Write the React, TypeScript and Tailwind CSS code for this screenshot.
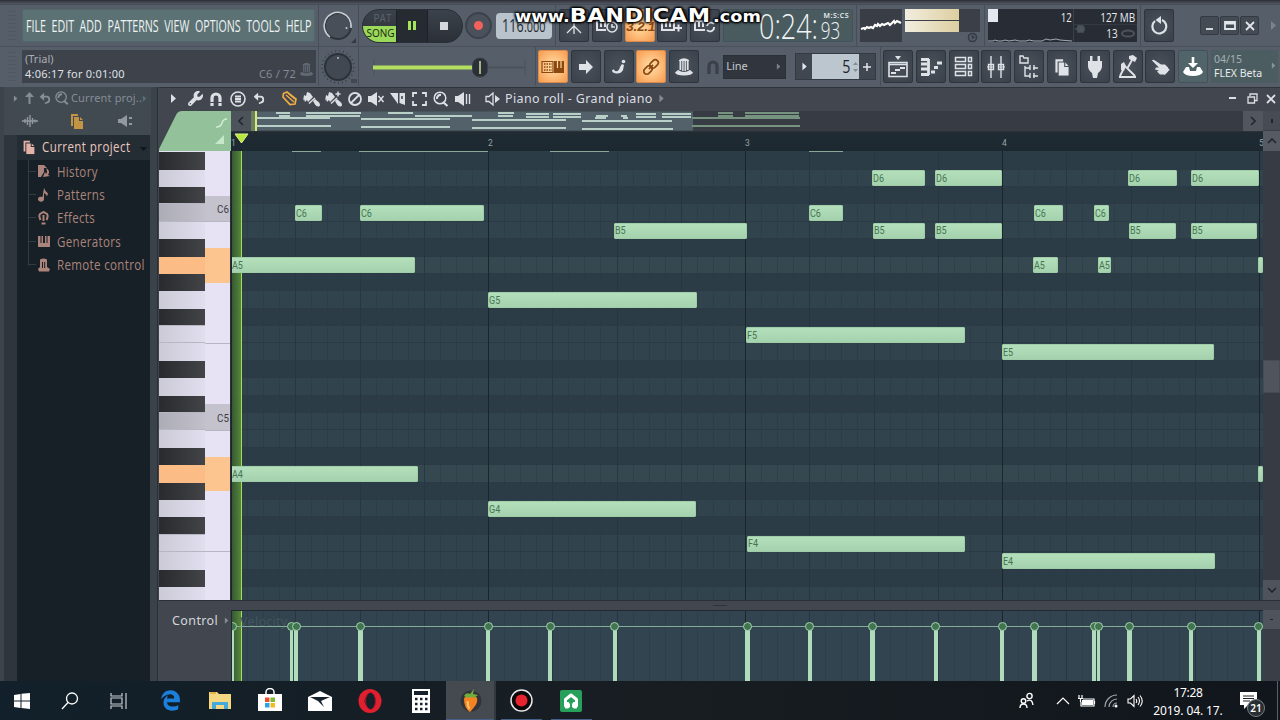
import type { ReactNode } from "react";
import { FaEdgeLegacy, FaWrench } from "react-icons/fa6";

const ROW = 17.4;
const BAR = 257;
const STEP = BAR / 16;

/* semitone rows shown in the roll, top to bottom */
const rows = [
    "D#6", "D6", "C#6", "C6", "B5", "A#5", "A5", "G#5", "G5", "F#5", "F5", "E5", "D#5",
    "D5", "C#5", "C5", "B4", "A#4", "A4", "G#4", "G4", "F#4", "F4", "E4", "D#4", "D4",
];

/* note name, start, end */
const notes: [string, number, number][] = [
    ["D6", 640.5, 694], ["D6", 704, 770.5], ["D6", 897, 946], ["D6", 959.5, 1028],
    ["C6", 64, 91], ["C6", 129, 253], ["C6", 578, 612], ["C6", 803, 832], ["C6", 863, 878],
    ["B5", 383, 516], ["B5", 642, 694], ["B5", 704, 770.5], ["B5", 898, 945], ["B5", 959.5, 1026],
    ["A5", 0, 184], ["A5", 802, 827], ["A5", 867, 880], ["A5", 1027, 1032],
    ["G5", 256.5, 466], ["F5", 515, 734], ["E5", 771, 983],
    ["A4", 0, 187], ["A4", 1027, 1032],
    ["G4", 256.5, 464.5], ["F4", 515.5, 734], ["E4", 771, 984],
];

/* x, width of the stem */
const velocities: [number, number][] = [
    [2, 3], [61, 3.5], [65.5, 3.5], [129.5, 5], [257.5, 4], [319.5, 4], [384, 4], [516.5, 5], [579, 4],
    [642, 5], [705, 4], [771.5, 4], [803.5, 5], [863.5, 3.5], [868, 3.5], [898.5, 5], [960.5, 4], [1028, 4],
];

/* x, y, width inside the overview strip */
const overview: [number, number, number][] = [
    [25, 0, 14], [28, 3, 11], [55, 0, 55], [55, 3, 54], [5, 5, 74], [5, 13, 75],
    [137, 0, 25], [164, 3, 57], [110, 6, 89], [110, 14, 89], [221, 7, 94], [221, 15, 94],
    [247, 0, 16], [247, 3, 15], [275, 1, 23], [275, 4, 23], [302, 1, 28], [302, 4, 28],
    [345, 3, 12], [344, 5, 11], [370, 3, 6], [372, 5, 5], [385, 1, 20], [385, 4, 20],
    [411, 1, 29], [411, 4, 29], [331, 8, 90], [331, 16, 91],
];
const overviewRest: [number, number, number][] = [
    [467, 0, 15], [467, 3, 15], [494, 0, 54], [494, 3, 54], [441, 5, 108], [441, 13, 108],
];

const isBlack = (n: string) => n.includes("#");

function Icon({ w = 24, h = w, className = "", children }: { w?: number; h?: number; className?: string; children: ReactNode }) {
    return (
        <svg
            width={w}
            height={h}
            viewBox={`0 0 ${w} ${h}`}
            fill="none"
            stroke="currentColor"
            strokeWidth="1.6"
            className={`shrink-0 ${className}`}
        >
            {children}
        </svg>
    );
}

function Btn({ on = false, children }: { on?: boolean; children: ReactNode }) {
    return (
        <div
            className={`flex h-[33px] w-[30px] shrink-0 items-center justify-center rounded-[2px] border ${
                on
                    ? "border-[#d98a4c] bg-radial from-[#ffe0a8] to-[#f79a4c] text-[#8a4712]"
                    : "border-[#30353d] bg-radial from-[#4a515b] to-[#3b414b] text-[#dfe3e8]"
            }`}
        >
            {children}
        </div>
    );
}

function Section({ className, children }: { className: string; children?: ReactNode }) {
    return <div className={`flex h-full shrink-0 items-center border-r border-[#474e58] ${className}`}>{children}</div>;
}

function Grip() {
    return (
        <div className="ml-1 flex w-2 flex-col gap-[3px]">
            {Array.from({ length: 8 }, (_, i) => (
                <div key={i} className="h-px bg-[#4f5761]" />
            ))}
        </div>
    );
}

function Triangle({ className = "" }: { className?: string }) {
    return (
        <Icon w={5} h={9} className={className}>
            <path d="M0 0 5 4.5 0 9z" fill="currentColor" stroke="none" />
        </Icon>
    );
}

function Pages({ className = "" }: { className?: string }) {
    return (
        <Icon w={14} h={16} className={className}>
            <path d="M1 1h7v2H3v10H1z" fill="currentColor" stroke="none" />
            <path d="M4 4h5v4h4v8H4zM10 4l3 3h-3z" fill="currentColor" stroke="none" />
        </Icon>
    );
}

function Hat({ w = 20, className = "" }: { w?: number; className?: string }) {
    return (
        <svg width={w} height={w} viewBox="0 0 20 20" fill="currentColor" className={`shrink-0 ${className}`}>
            <path d="M5.500 3h1.800v10H5.500zM8.200 2h1.400v12H8.200zM10.500 2h1.400v12h-1.400zM12.800 3h1.800v10h-1.800z" />
            <path d="M5 3Q10-.5 15 3v1H5zM4 13q6 4 12 0l3 2.500q-1 3-9 3t-9-3z" />
        </svg>
    );
}

function Magnet({ className = "" }: { className?: string }) {
    return (
        <Icon w={14} h={15} className={className}>
            <path d="M3 15V7a4 4 0 0 1 8 0v8" strokeWidth="3.200" />
            <path d="M1 11.500h4M9 11.500h4" stroke="#42464f" strokeWidth="1" />
        </Icon>
    );
}

function Undo({ className = "" }: { className?: string }) {
    return (
        <Icon w={12} h={13} className={className}>
            <path d="M4 4.500h3a3.200 3.200 0 0 1 1 6.500L6 12" strokeWidth="2" />
            <path d="M0 4.500 5 0v9z" fill="currentColor" stroke="none" />
        </Icon>
    );
}

function Lens({ className = "" }: { className?: string }) {
    return (
        <Icon w={16} h={16} className={className}>
            <circle cx="7" cy="7" r="5.800" strokeWidth="1.500" />
            <path d="M4 8a3.500 3.500 0 0 1 4-4M10 11l4.500 4" strokeWidth="2.200" />
        </Icon>
    );
}

function Brush({ plus = false }: { plus?: boolean }) {
    return (
        <Icon w={17} h={16}>
            <path d="M0 10 1 4l2 1 1-4 3 1 3 4-5 5-1-2-2 2-1-3z" fill="currentColor" stroke="none" />
            <path d="M10 10l2-2 4 3.500q2 2.500 0 4-2.500.5-4-2z" fill="currentColor" stroke="none" />
            <path d="M6 12.500 12 7" strokeWidth="1.500" />
            {plus && <path d="M10.500 3h5M13 .5v5" strokeWidth="1.500" />}
        </Icon>
    );
}

function TopToolbar() {
    return (
        <div className="flex h-[41px] shrink-0 pl-1">
            <Section className="w-[315px]">
                <Grip />
                <div className="ml-1.5 flex h-[33px] w-[293px] items-center rounded-[2px] border border-[#53666a] bg-[#5b7174] pl-[3px] text-[16px] text-[#eef3f3]">
                    <span className="w-[284px] origin-left scale-x-[0.667] font-['Open_Sans',sans-serif] font-medium whitespace-pre">
                        FILE  EDIT  ADD  PATTERNS  VIEW  OPTIONS  TOOLS  HELP
                    </span>
                </div>
            </Section>
            <Section className="w-10 justify-center">
                <Icon w={36} h={36}>
                    <circle cx="17" cy="18" r="13" fill="#484f59" stroke="#2e343c" strokeWidth="2" />
                    <path d="M9 29A13.500 13.500 0 1 1 30 20" stroke="#c9ced4" strokeWidth="1.500" />
                    <circle cx="25.500" cy="20" r="1" fill="#c9ced4" stroke="none" />
                    <path d="M35 30v5h-5z" fill="#343a42" stroke="none" />
                </Icon>
            </Section>
            <Section className="w-[197px]">
                <div className="ml-[3px] flex h-[34px] w-[101px] overflow-hidden rounded-[17px] border border-[#2a2f37] bg-linear-to-b from-[#3c424b] to-[#2b3038]">
                    <div className="flex w-[33px] flex-col text-center font-['Open_Sans',sans-serif] text-[10px] leading-[17px]">
                        <span className="h-4 pl-1.5 text-[#5d646d]">PAT</span>
                        <span className="h-[17px] bg-[#9bd95b] pl-0.5 leading-[14px] text-[#18240f]">SONG</span>
                    </div>
                    <div className="flex w-8 items-center justify-center gap-0.5 border-x border-[#1d2127] bg-[#262b32]">
                        <div className="h-[9px] w-[3px] bg-[#a4e45c]" />
                        <div className="h-[9px] w-[3px] bg-[#a4e45c]" />
                    </div>
                    <div className="flex flex-1 items-center justify-center pr-0.5">
                        <div className="size-2 bg-[#d4d7dc]" />
                    </div>
                </div>
                <div className="ml-[2px] flex size-[27px] items-center justify-center rounded-full border-2 border-[#3c424b] bg-[#4a515b]">
                    <div className="size-[9px] rounded-full bg-[#f4605a]" />
                </div>
                <div className="ml-[4px] flex h-[26px] w-14 items-center rounded-[4px] bg-[#b9c3cb] pl-1.5 font-['Open_Sans',sans-serif] text-[#22282e]">
                    <span className="w-[22px] origin-left scale-x-[0.7] text-[18px]">116</span>
                    <span className="origin-left scale-x-[0.78] pt-0.5 text-[14px]">.000</span>
                </div>
            </Section>
            <Section className="w-[301px] gap-[2.8px] pl-[3px]">
                <Btn>
                    <Icon w={24} h={16}>
                        <path d="M12 16V3M12 8 5 15M12 8l7 7" strokeWidth="1.300" />
                    </Icon>
                </Btn>
                <Btn>
                    <Icon w={24} h={16}>
                        <path d="M2 2v10h9M6 2v7M10 2v7M2 3h9" strokeWidth="2" />
                        <circle cx="17" cy="9" r="5" />
                        <path d="M17 6v3h3" />
                    </Icon>
                </Btn>
                <Btn on>
                    <span className="pt-1 font-['Liberation_Mono',monospace] text-[13px] font-bold tracking-[-2.400px] italic">3.2.1</span>
                </Btn>
                <Btn>
                    <Icon w={24} h={16}>
                        <path d="M2 2v10h12V2M6 2v7M10 2v7M2 3h12" strokeWidth="2" />
                        <path d="M15 10h7M18.500 6.500v7" strokeWidth="2" />
                    </Icon>
                </Btn>
                <Btn>
                    <Icon w={24} h={16}>
                        <path d="M2 2v10h10M6 2v7M10 2v7M2 3h9" strokeWidth="2" />
                        <path d="M14 8a4 4 0 0 1 7-2M21 9a4 4 0 0 1-7 3" strokeWidth="1.800" />
                    </Icon>
                </Btn>
                <div className="flex h-[33px] w-[130px] items-start rounded-[2px] border border-[#43535a] bg-[#4a5b60] font-['Open_Sans',sans-serif] font-light text-[#f2f5f6]">
                    <span className="ml-[35px] w-[60px] origin-left scale-x-[0.77] text-[35px] leading-[31px]">0:24:</span>
                    <div className="flex w-[30px] flex-col items-end">
                        <span className="mt-px text-[7px] leading-[9px] font-semibold tracking-[0.500px]">M:S:CS</span>
                        <span className="mr-[9px] origin-right scale-x-[0.74] text-[23px] leading-[21px]">93</span>
                    </div>
                </div>
            </Section>
            <Section className="w-32 pl-[3px]">
                <div className="flex h-[33px] w-[42px] items-center bg-[#383d46] text-white">
                    <Icon w={42} h={20}>
                        <path d="M1 13l3-1 1 1 2-2 2 1 2-1 2 1 2-3 2 1 1-2 2 2 2-2 2 1 2-1 2-1 2 2 2-2 2-2 1 2 2-2 2 1 2 1" strokeWidth="2.200" />
                    </Icon>
                </div>
                <div className="ml-[3px] flex h-[33px] w-[75px] flex-col items-end">
                    <div className="flex h-[23px] w-full flex-col gap-px bg-[#3a3f48]">
                        <div className="h-[11px] w-[54px] bg-linear-to-r from-[#f2ede0] to-[#ddcf9f]" />
                        <div className="h-[11px] w-[54px] bg-linear-to-r from-[#f2ede0] to-[#ddcf9f]" />
                    </div>
                    <Icon w={11} h={11} className="mr-0.5 text-[#353b44]">
                        <circle cx="5.500" cy="5.500" r="4" />
                        <path d="M5.500 3v3l2-1" />
                    </Icon>
                </div>
            </Section>
            <Section className="w-[156px] pl-[3px]">
                <div className="flex h-[33px] w-[149px] bg-[#282d35] font-['Open_Sans',sans-serif] text-[12px] text-[#e6eaee]">
                    <div className="flex w-[86px] flex-col justify-between border-r border-[#3b414a]">
                        <div className="flex justify-between pr-px">
                            <div className="h-[13px] w-2.5 bg-[#e4e9f0]" />
                            <span className="origin-right scale-x-[0.8] leading-[17px]">12</span>
                        </div>
                        <Icon w={85} h={4} className="text-[#a0aab2]">
                            <path d="M0 3h5l2-1 3 1h4l3-1 4 1 6-1 4 1h7l3-1 5 1h8l4-2 4 1 6-1 4 1 12 1" strokeWidth="1" />
                        </Icon>
                    </div>
                    <div className="flex flex-1 flex-col">
                        <div className="flex h-4 justify-end border-b border-[#343a43] pr-0.5">
                            <span className="origin-right scale-x-[0.83] leading-[17px]">127 MB</span>
                        </div>
                        <div className="flex h-[17px] items-center text-[#4c535d]">
                            <Icon w={12} h={9} className="-mt-2">
                                <path d="M1 4h3M4 1h5v6H4zM9 3h2M9 5h2" fill="currentColor" />
                            </Icon>
                            <span className="ml-auto origin-right scale-x-[0.83] pt-px text-[#e6eaee]">13</span>
                            <Icon w={16} h={9} className="mr-px ml-0.5">
                                <ellipse cx="8" cy="4.500" rx="6" ry="3" strokeWidth="2" />
                            </Icon>
                        </div>
                    </div>
                </div>
            </Section>
            <div className="flex flex-1 items-center pl-[3px]">
                <Btn>
                    <Icon w={20} h={22}>
                        <path d="M6 6a7 7 0 1 0 7-1" strokeWidth="2.200" />
                        <path d="M12 1v8L6.500 5z" fill="currentColor" stroke="none" />
                    </Icon>
                </Btn>
                <div className="ml-[26px] flex gap-px text-[#e2e6ea]">
                    {["M5 12h7", "M4 5h10v7H4zM4 6.500h10", "M5 5l8 8M13 5l-8 8"].map((d) => (
                        <div key={d} className="flex size-[19px] items-center justify-center rounded-[2px] border border-[#343a42] bg-[#444b54]">
                            <Icon w={18}>
                                <path d={d} strokeWidth="1.800" />
                            </Icon>
                        </div>
                    ))}
                </div>
                <Triangle className="ml-3 text-[#7b838d]" />
            </div>
        </div>
    );
}

function SecondToolbar() {
    return (
        <div className="flex h-[41px] shrink-0 border-t border-[#4a515b] pb-px pl-1">
            <Section className="w-[315px]">
                <Grip />
                <div className="ml-1.5 flex h-[33px] w-[294px] flex-col bg-[#3e424b] pt-px pr-0.5 pl-[3px] font-['Noto_Sans',sans-serif] text-[11px] leading-[15px] text-[#dde0e5]">
                    <span className="text-[#a9aeb6]">(Trial)</span>
                    <div className="flex items-center">
                        <span className="tracking-[0.230px]">4:06:17 for 0:01:00</span>
                        <span className="ml-auto tracking-[0.200px] text-[#858b94]">C6 / 72</span>
                        <Hat w={15} className="-mt-2 ml-[3px] text-[#636973]" />
                    </div>
                </div>
            </Section>
            <Section className="w-10 justify-center">
                <Icon w={36} h={36}>
                    <circle cx="17" cy="18" r="16" stroke="#343a42" strokeWidth="1.500" strokeDasharray="1 3" />
                    <circle cx="17" cy="18" r="13" fill="#414852" stroke="#2c3139" strokeWidth="2" />
                    <circle cx="17" cy="9" r="1" fill="#b4bac1" stroke="none" />
                    <path d="M31 30v4M33 30v4M35 30v4" stroke="#343a42" strokeWidth="1.200" />
                </Icon>
            </Section>
            <Section className="w-[177px] pl-3.5">
                <svg width="153" height="26" viewBox="0 0 153 26">
                    <path d="M1 5v16M152 5v16" stroke="#4b525c" />
                    <path d="M0 13.500h152" stroke="#4b525c" strokeWidth="2" />
                    <path d="M0 13.500h101" stroke="#b3df60" strokeWidth="4" />
                    <rect x="99.500" y="4" width="15" height="19" rx="7" fill="#2b3037" stroke="#3d434c" />
                    <path d="M107 7v13" stroke="#d0dba3" strokeWidth="1.500" />
                </svg>
            </Section>
            <Section className="w-[345px] pl-0.5">
                <div className="flex gap-[2.800px]">
                    <Btn on>
                        <Icon w={24} h={14}>
                            <path d="M1 1.500h11v11H1z" strokeWidth="1.200" />
                            <path d="M3 4h8M3 7h8M3 10h8" strokeWidth="1.500" strokeDasharray="1.500 1" />
                            <path d="M13 1h10v12H13z" fill="currentColor" stroke="none" />
                            <path d="M16.500 1v7M20 1v7" stroke="#ffd79a" strokeWidth="1.200" />
                        </Icon>
                    </Btn>
                    <Btn>
                        <Icon w={16} h={14}>
                            <path d="M1 4h7V0l7 7-7 7v-4H1z" fill="currentColor" stroke="none" />
                        </Icon>
                    </Btn>
                    <Btn>
                        <Icon w={16} h={16}>
                            <path d="M1 12q0-2 2-1.500l1 1.500q4 1 5-4l2-3 2 1-1 5q-2 4-7 3.500l-3-1z" fill="currentColor" stroke="none" />
                            <circle cx="12.500" cy="2.500" r="1.800" fill="currentColor" stroke="none" />
                        </Icon>
                    </Btn>
                    <Btn on>
                        <Icon w={18} h={18}>
                            <g transform="rotate(-45 9 9)">
                                <rect x="0" y="6" width="9.500" height="6" rx="3" strokeWidth="1.700" />
                                <rect x="8.500" y="6" width="9.500" height="6" rx="3" strokeWidth="1.700" />
                                <path d="M6 9h6" strokeWidth="1.500" />
                            </g>
                        </Icon>
                    </Btn>
                    <Btn>
                        <Hat />
                    </Btn>
                </div>
                <Magnet className="ml-[7px] text-[#3a4048]" />
                <div className="ml-[3px] flex h-6 w-[63px] items-center justify-between border border-[#2b3037] bg-[#31363e] px-1 font-['Noto_Sans',sans-serif] text-[11px] text-[#c3c8ce]">
                    <span className="-ml-1 pl-0.5">Line</span>
                    <Triangle className="scale-75 text-[#7a8189]" />
                </div>
                <div className="ml-[9px] flex h-[27px] border border-[#343a42] text-[#e3e7eb]">
                    <div className="flex w-4 items-center justify-center bg-[#414750]">
                        <Triangle className="scale-90" />
                    </div>
                    <div className="flex w-[47px] items-center justify-end bg-[#bcc6ce] pr-px text-[#1e242b]">
                        <span className="mr-px scale-x-[0.75] font-['Open_Sans',sans-serif] text-[19px]">5</span>
                        <Icon w={5} h={12} className="text-[#828d97]">
                            <path d="M0 4 2.500 1 5 4zM0 8l2.500 3L5 8z" fill="currentColor" stroke="none" />
                        </Icon>
                    </div>
                    <div className="flex w-4 items-center justify-center bg-[#414750]">
                        <Icon w={8}>
                            <path d="M0 4h8M4 0v8" strokeWidth="1.500" />
                        </Icon>
                    </div>
                </div>
            </Section>
            <div className="flex flex-1 items-center gap-[2.800px] pl-0.5">
                <Btn>
                    <Icon w={20} h={22}>
                        <path d="M7 0h6l-3 4z" fill="currentColor" stroke="none" />
                        <path d="M1 6.500h18v14H1zM1 8.500h18" />
                        <path d="M3 17h5M7 14h5M12 12h5" strokeWidth="2" />
                    </Icon>
                </Btn>
                <Btn>
                    <Icon w={22} h={20}>
                        <path d="M1 2.500h8M1 7h6M1 12h8M1 17.500h8M8.500 2v16" strokeWidth="2.800" />
                        <path d="M11 15h4M14 10.500h4M17 6h5" strokeWidth="3" />
                    </Icon>
                </Btn>
                <Btn>
                    <Icon w={20} h={21}>
                        <path d="M1.500 1.500h10v4h-10zM1.500 8.500h10v4h-10zM1.500 15.500h10v4h-10zM14.500 1.500h3v4h-3zM14.500 8.500h3v4h-3zM14.500 15.500h3v4h-3z" strokeWidth="1.500" />
                    </Icon>
                </Btn>
                <Btn>
                    <Icon w={18} h={22}>
                        <path d="M4 0v22M14 0v22M1.500 8.500h5v5h-5zM11.500 8.500h5v5h-5z" strokeWidth="1.400" />
                        <path d="M0 11h7M11 11h7" strokeWidth="1.200" />
                    </Icon>
                </Btn>
                <Btn>
                    <Icon w={20} h={24}>
                        <path d="M1 1h3l1 2h4v5H1zM6 11v10h5M6 13h5M11 10v5M11 18v5M14 13h5M14 21h5M15 10v5M15 18v5" strokeWidth="1.400" />
                    </Icon>
                </Btn>
                <Btn>
                    <Pages className="scale-110" />
                </Btn>
                <Btn>
                    <Icon w={14} h={22}>
                        <path d="M2 0h2.500v5H2zM9.500 0H12v5H9.500zM0 5h14v5q0 4-4 7l-1 5H5l-1-5q-4-3-4-7z" fill="currentColor" stroke="none" />
                    </Icon>
                </Btn>
                <Btn>
                    <Icon w={20} h={23}>
                        <path d="M11 1l4-1 4 3-2 4-6-3z" fill="currentColor" stroke="none" />
                        <path d="M14 5 9 14M4 9l1 6-3 6M4 9l5 4 8 8M1 22h17" strokeWidth="1.900" />
                        <path d="M3 9l3-2 2 4-2 5-3-1z" fill="currentColor" stroke="none" />
                    </Icon>
                </Btn>
                <Btn>
                    <Icon w={19} h={16}>
                        <path d="M1 1.500q1-1.500 3 0l6 4h4l3 3v4l-3 3H9l-3-3 2-1-4-1 1-2 3 0z" fill="currentColor" stroke="none" />
                        <path d="M13 15l5-5" strokeWidth="2" />
                    </Icon>
                </Btn>
                <div className="flex h-[33px] w-[30px] shrink-0 items-center justify-center rounded-[2px] border border-[#42525a] bg-[#50646a] text-white">
                    <Icon w={20} h={20}>
                        <path d="M10 0v7" strokeWidth="2.600" />
                        <path d="M5 6h10l-5 5zM3 10h3l1 4h6l1-4h3l3 5q-2 4-10 4T0 15z" fill="currentColor" stroke="none" />
                    </Icon>
                </div>
                <div className="flex h-[33px] w-[67px] items-center justify-between bg-[#4c5d62] pr-0.5 pb-0.5 pl-[3px] font-['Noto_Sans',sans-serif] text-[10.500px] leading-[14px] text-[#e6ebeb]">
                    <div className="flex flex-col whitespace-nowrap">
                        <span className="text-[#a3b0b4]">04/15</span>
                        <span>FLEX Beta</span>
                    </div>
                    <Triangle className="-ml-2 scale-75 text-[#84959a]" />
                </div>
            </div>
        </div>
    );
}

function Browser() {
    const items: [string, ReactNode][] = [
        ["History", <path d="M1 1h6l3 3H7v4l-3 5H1zM9 4q5 3 2 7l2 1-7 1 2-5 1 2q2-2 0-6z" fill="currentColor" stroke="none" key="h" />],
        ["Patterns", <path d="M7 0q1 3 4 5.500l-1 3q0-2-3-3.500v6a3 2.500 0 1 1-1.500-2z" fill="currentColor" stroke="none" key="p" />],
        ["Effects", <path d="M3.500 9Q1.500 5 3 3l3.500-2L10 3q1.500 2-.5 6M6.500 4v6M4.500 12.500h4" key="e" strokeWidth="2" />],
        ["Generators", <path d="M1 2h2.500v7h1V2H6v7h2V2h1.500v7h1V2H13v11H1z" fill="currentColor" stroke="none" key="g" />],
        ["Remote control", <path d="M3 1.500Q6.500-.5 10 1.500V9l3 2-1 2.500H2L1 11l2-2zM5 4v6h1V4zM7.200 4v6h1V4z" fill="currentColor" fillRule="evenodd" stroke="none" key="r" />],
    ];
    return (
        <div className="flex w-[154px] shrink-0 flex-col border-r border-[#2a3038] bg-[#3a424a]">
            <div className="flex h-12 w-[147px] flex-col bg-[#414951] pt-[3px] text-[#858d96]">
                <div className="flex h-4 items-center pl-[9px]">
                    <Triangle className="scale-75" />
                    <Icon w={9} h={12} className="ml-[7px]">
                        <path d="M4.500 12V3" strokeWidth="2" />
                        <path d="M0 5l4.500-5L9 5z" fill="currentColor" stroke="none" />
                    </Icon>
                    <Undo className="ml-[5px] scale-90" />
                    <Lens className="ml-[3px] scale-90" />
                    <span className="ml-px font-['Noto_Sans',sans-serif] text-[11px] tracking-[0.150px]">Current proj..</span>
                    <Triangle className="scale-75 text-[#53717a]" />
                </div>
                <div className="mt-[7px] flex items-center pl-[18px]">
                    <Icon w={16} h={14} className="text-[#9299a0]">
                        <path d="M0 7h16M3 5v4M5.500 3v8M8 1v12M10.500 4v6M13 5.500v3" strokeWidth="1.400" />
                    </Icon>
                    <Pages className="ml-8 text-[#c39443]" />
                    <Icon w={17} h={14} className="ml-[34px] text-[#9299a0]">
                        <path d="M0 5h3l6-4v12L3 9H0zM11 3h3v2h-3zM11 9h3v2h-3z" fill="currentColor" stroke="none" />
                    </Icon>
                </div>
            </div>
            <div className="flex flex-1">
                <div className="w-[13px] bg-[#2d363d]" />
                <div className="w-[133px] bg-[#171f27] font-['Open_Sans',sans-serif] whitespace-nowrap">
                    <div className="flex h-[25px] items-center bg-[#242c34] pb-0.5 pl-[5px] text-[#e9c8bf]">
                        <Pages className="scale-90 text-[#e3b3a8]" />
                        <span className="ml-[6px] w-[98px] origin-left scale-x-[0.825] text-[14px] tracking-[0.5px]">Current project</span>
                        <Icon w={7} h={4} className="mt-1 text-[#10161b]">
                            <path d="M0 0h7L3.500 4z" fill="currentColor" stroke="none" />
                        </Icon>
                    </div>
                    <div className="ml-[11px] flex h-[106px] flex-col border-l border-[#2f3c42] text-[#ab857b]">
                        {items.map(([label, icon]) => (
                            <div key={label} className="flex h-[23.400px] shrink-0 items-center pb-px">
                                <div className="h-px w-[7px] shrink-0 bg-[#2f3c42]" />
                                <Icon w={14} h={14} className="ml-px">
                                    {icon}
                                </Icon>
                                <span className="ml-[6px] w-[88px] origin-left scale-x-[0.825] text-[14px] tracking-[0.4px]">{label}</span>
                            </div>
                        ))}
                    </div>
                </div>
            </div>
        </div>
    );
}

function RollTitle() {
    return (
        <div className="flex h-6 shrink-0 items-center border-t border-[#2f343b] bg-[#42464f] pl-3 text-[#dcdfe4] [&_svg]:mb-0.5">
            <Triangle />
            <FaWrench className="ml-3 size-[15px]" />
            <Magnet className="ml-[6px]" />
            <Icon w={16} className="ml-[7px]">
                <circle cx="8" cy="8" r="7" />
                <path d="M5 5.500h6M5 8h6M5 10.500h6" strokeWidth="1.800" />
            </Icon>
            <Undo className="ml-[7px] scale-90" />
            <Icon w={16} h={15} className="ml-[17px] text-[#f0ad45]">
                <path d="M1.500 2.500 5 1l9 7-1 5-5 .5L1 6z" strokeWidth="1.700" />
                <path d="M4 4l8 7M7 3l6 5" strokeWidth="1.300" />
            </Icon>
            <div className="ml-[5px] flex items-center gap-[5px]">
                <Brush />
                <Brush plus />
                <Icon w={16}>
                    <circle cx="8" cy="8" r="6" strokeWidth="1.800" />
                    <path d="M4 12l8-8" strokeWidth="1.800" />
                </Icon>
                <Icon w={17} h={14}>
                    <path d="M0 4h3l6-4v14l-6-4H0z" fill="currentColor" stroke="none" />
                    <path d="M10.500 4l5 6M15.500 4l-5 6" strokeWidth="1.500" />
                </Icon>
                <Icon w={17} h={14}>
                    <path d="M0 1h8v11zM9.500 1H15v12l-5.500-2z" fill="currentColor" stroke="none" />
                    <path d="M12 4v3" stroke="#42464f" />
                </Icon>
                <Icon w={15} h={14}>
                    <path d="M1 5V1h4M10 1h4v4M14 9v4h-4M5 13H1V9" strokeWidth="1.800" />
                </Icon>
                <Lens className="ml-px" />
                <Icon w={17} h={14} className="ml-px">
                    <path d="M0 4h3l6-4v14l-6-4H0z" fill="currentColor" stroke="none" />
                    <path d="M11.500 2v10M14.500 2v10" strokeWidth="1.400" />
                </Icon>
            </div>
            <Icon w={15} h={14} className="ml-[13px]">
                <path d="M1 4.500h3l4-3.500v12L4 9.500H1z" strokeWidth="1.300" />
                <path d="M10 3l5 4-5 4z" fill="currentColor" stroke="none" />
            </Icon>
            <span className="ml-[5px] pb-px font-['Noto_Sans',sans-serif] text-[12.500px] tracking-[0.380px] whitespace-nowrap">
                Piano roll - Grand piano
            </span>
            <Triangle className="ml-1.5 scale-90 text-[#868b93]" />
            <div className="ml-auto flex items-center pr-[4px]">
                <div className="-mt-1 h-0.5 w-[7px] bg-current" />
                <Icon w={11} className="ml-[11px]">
                    <path d="M1 4h6.500v6H1zM3 3V1h7v6.500H8" strokeWidth="1.300" />
                </Icon>
                <Icon w={10} className="ml-2">
                    <path d="M1 1l8 8M9 1 1 9" strokeWidth="1.800" />
                </Icon>
            </div>
        </div>
    );
}

function Overview() {
    return (
        <div className="flex h-5 shrink-0 bg-[#373b43]">
            <div className="flex w-[20px] items-center justify-center bg-[#4c535b] text-[#22282e]">
                <Icon w={6} h={10}>
                    <path d="M5 1 1 5l4 4" />
                </Icon>
            </div>
            <div className="relative flex-1">
                <div className="h-full w-[442px] border-y border-[#47535b] bg-[#53616a]" />
                {overview.map(([x, y, w], i) => (
                    <div key={i} className={`absolute bg-[#b9d0c8] ${y > 4 ? "h-0.5" : "h-[1.500px]"}`} style={{ left: x, top: y + 1, width: w }} />
                ))}
                {overviewRest.map(([x, y, w], i) => (
                    <div key={i} className={`absolute bg-[#76937f] ${y > 4 ? "h-0.5" : "h-[1.500px]"}`} style={{ left: x, top: y + 1, width: w }} />
                ))}
                <div className="absolute top-0 left-0 h-5 w-[6px] border-r-2 border-[#d5ea78] bg-[#6b8060]" />
            </div>
            <div className="mr-[17px] flex w-5 items-center justify-center bg-[#52575f] text-[#22282e]">
                <Icon w={6} h={10}>
                    <path d="M1 1l4 4-4 4" />
                </Icon>
            </div>
        </div>
    );
}

function Ruler() {
    return (
        <div className="relative h-5 shrink-0 overflow-hidden border-t border-[#2b3238] bg-linear-to-b from-[#202b33] to-[#1c2830] font-['Roboto',sans-serif] text-[8.500px] leading-[22px] text-[#94a2a8]">
            {[1, 2, 3, 4, 5].map((n) => (
                <span key={n} className="absolute top-0" style={{ left: (n - 1) * BAR }}>
                    {n}
                </span>
            ))}
            <Icon w={15} h={11} className="absolute top-px left-[3px]">
                <path d="M1 1h13L7.500 10z" fill="#b5e83a" stroke="#dff28d" strokeWidth="1" />
            </Icon>
        </div>
    );
}

/* white keys on the right side of the keyboard, heights in semitones */
function Keyboard() {
    const whites = ["D6", "C6", "B5", "A5", "G5", "F5", "E5", "D5", "C5", "B4", "A4", "G4", "F4", "E4", "D4"];
    const size = (n: string) => ("DGA".includes(n[0]) ? 2 : 1.5);
    const fill = (n: string) =>
        n[0] === "A" ? "bg-[#fcc48e]" : n[0] === "C" ? "bg-[#c4c2cc]" : "bg-[#e7e3f4]";
    return (
        <div className="flex h-[449px] w-[71px] shrink-0 overflow-hidden bg-[#e7e3f4]">
            <div className="w-[46px] pt-[1.200px]">
                {rows.map((n) => (
                    <div
                        key={n}
                        className={`h-[17.400px] ${
                            isBlack(n)
                                ? "bg-linear-to-r from-[#292a2d] to-[#434447]"
                                : n[0] === "A"
                                  ? "bg-[#fbbd85]"
                                  : n[0] === "C"
                                    ? "bg-linear-to-r from-[#acacb7] to-[#c2c0ca]"
                                    : "bg-linear-to-r from-[#cbcad6] to-[#e1deee]"
                        } ${n[0] === "C" || n[0] === "F" ? "border-b border-[#b9b6c4]" : ""}`}
                    />
                ))}
            </div>
            <div className="flex-1 pt-[9.900px]">
                {whites.map((n) => (
                    <div
                        key={n}
                        className={`flex items-end justify-end overflow-visible pr-px font-['Roboto',sans-serif] text-[11.500px] leading-[23px] text-[#3c3c44] ${fill(n)} ${
                            n[0] === "C" || n[0] === "F" ? "border-b border-[#b9b6c4]" : ""
                        }`}
                        style={{ height: size(n) * ROW }}
                    >
                        {n[0] === "C" && <span className="origin-right scale-x-[0.85]">{n}</span>}
                    </div>
                ))}
            </div>
        </div>
    );
}

function GridLines() {
    return (
        <>
            {Array.from({ length: 65 }, (_, i) => (
                <div
                    key={i}
                    className={`absolute inset-y-0 w-px ${
                        i % 16 === 0 ? "bg-[#1a262e]" : i % 4 === 0 ? "bg-[#263640]/90" : "bg-[#2a3a44]/50"
                    }`}
                    style={{ left: Math.round(i * STEP) - 1 }}
                />
            ))}
        </>
    );
}

function Playhead() {
    return (
        <div className="absolute inset-y-0 left-0 w-2.5 border-r border-[#a4dc5e] bg-linear-to-r from-[#365c2e]/90 to-[#5c8f3a]/90" />
    );
}

function NoteGrid() {
    return (
        <div className="relative h-[449px] w-[1032px] overflow-hidden border-l border-[#1b252c] bg-[#2d3d48]">
            <div className="pt-[1.200px]">
                {rows.map((n) => (
                    <div
                        key={n}
                        className={`h-[17.400px] border-b border-[#2b3a44] ${
                            isBlack(n) ? "bg-[#2c3c47]" : n[0] === "A" ? "bg-[#35474f]" : "bg-[#31434d]"
                        }`}
                    />
                ))}
            </div>
            <GridLines />
            <Playhead />
            {[[60, 29], [127, 129], [318, 59], [577, 34]].map(([x, w]) => (
                <div key={x} className="absolute top-0 h-px bg-[#8aa79a]" style={{ left: x, width: w }} />
            ))}
            {notes.map(([n, a, b], i) => (
                <div
                    key={i}
                    className="absolute flex h-4 items-center overflow-hidden rounded-[1px] border border-[#9fcda8] bg-linear-to-b from-[#b4dfbb] to-[#a5d2ae] font-['Roboto',sans-serif] text-[10px] text-[#457552]"
                    style={{ left: a - 1, top: rows.indexOf(n) * ROW + 2, width: b - a }}
                >
                    {b - a > 8 && <span className="origin-left scale-x-[0.9]">{n}</span>}
                </div>
            ))}
        </div>
    );
}

function Velocity() {
    return (
        <div className="relative w-[1032px] overflow-hidden border-t border-l border-[#1f2a32] bg-[#32444f]">
            <GridLines />
            <Playhead />
            <span className="absolute top-0.5 left-2 font-['Noto_Sans',sans-serif] text-[12.500px] leading-[17px] tracking-[0.300px] text-[#44555f]">
                Velocity
            </span>
            <div className="absolute top-[15px] right-0 left-0 h-px bg-[#86ab98]" />
            {velocities.map(([x, w]) => (
                <div key={x}>
                    <div className="absolute top-[16px] bottom-0 bg-[#b0dcbb]" style={{ left: x - 1.500 - w / 2, width: w }} />
                    <div className="absolute top-[11px] size-[9px] rounded-full border-[1.500px] border-[#a3d2ae] bg-[#417550]" style={{ left: x - 6 }} />
                </div>
            ))}
        </div>
    );
}

function PianoRoll() {
    return (
        <div className="flex min-w-0 flex-1 flex-col bg-[#42464f] pl-px">
            <RollTitle />
            <div className="flex h-10 shrink-0">
                <svg width="72" height="40" viewBox="0 0 72 40" className="shrink-0">
                    <path d="M0 40V38L17 4Q19 0 23 0h49v40z" fill="#93c19a" />
                    <path d="M57 16q5 0 6-4t5-4" fill="none" stroke="#d0ebd3" strokeWidth="1.500" />
                    <path d="M65 24v9H56z" fill="#c5e8ca" />
                </svg>
                <div className="flex min-w-0 flex-1">
                    <div className="flex w-[1032px] flex-col">
                        <div className="w-[1049px]">
                            <Overview />
                        </div>
                        <Ruler />
                    </div>
                    <div className="flex w-[17px] flex-col bg-[#474c54] text-[#20262c]">
                        <div className="flex h-5 items-center justify-center border-b border-[#3a3f47]">
                            <div className="h-1 w-0.5 bg-current" />
                        </div>
                        <div className="flex flex-1 items-center justify-center bg-[#565b63]">
                            <Icon w={10} h={6}>
                                <path d="M1 5l4-4 4 4" />
                            </Icon>
                        </div>
                    </div>
                </div>
            </div>
            <div className="flex h-[450px] shrink-0 border-b border-[#2b3037]">
                <Keyboard />
                <div className="w-px bg-[#2b3037]" />
                <NoteGrid />
                <div className="flex w-[17px] flex-col justify-between bg-[#373b44] text-[#20262c]">
                    <div className="mt-[209px] h-[33px] border border-[#464b53] bg-[#50555d]" />
                    <div className="flex h-5 items-center justify-center bg-[#4f545c]">
                        <Icon w={10} h={6}>
                            <path d="M1 1l4 4 4-4" />
                        </Icon>
                    </div>
                </div>
            </div>
            <div className="flex h-[9px] shrink-0 items-center justify-center">
                <div className="h-px w-3.5 bg-[#2f343b]" />
            </div>
            <div className="flex min-h-0 flex-1">
                <div className="flex w-[72px] items-start pt-0.5 pl-[13px] font-['Noto_Sans',sans-serif] text-[12.500px] leading-[17px] text-[#d3d6db]">
                    <span className="w-[50px] tracking-[0.400px]">Control</span>
                    <Triangle className="mt-1 ml-0.5 scale-75 text-[#858b93]" />
                </div>
                <Velocity />
                <div className="w-[17px] bg-[#3a3e47]">
                    <div className="flex h-[19px] items-center justify-center bg-[#4f545c]">
                        <div className="h-px w-[3px] bg-[#22282e]" />
                    </div>
                </div>
            </div>
        </div>
    );
}

function TaskCell({ active = false, running = false, children }: { active?: boolean; running?: boolean; children: ReactNode }) {
    return (
        <div className={`flex h-full w-[50px] shrink-0 flex-col items-center ${active ? "border-r-2 border-[#33383e] bg-[#454a50]" : ""}`}>
            <div className="flex flex-1 items-center pt-px">{children}</div>
            <div className={`h-px ${active ? "w-full bg-[#44608a]" : running ? "w-[41px] bg-[#44608a]" : ""}`} />
        </div>
    );
}

function Taskbar() {
    return (
        <div className="flex h-[39px] shrink-0 items-center bg-linear-to-r from-[#11202a] via-[#181d22] to-[#10161b] text-white">
            <div className="flex w-11 justify-center">
                <Icon w={16} h={16}>
                    <path d="M0 2l6.500-1v6.500H0zM7.500.800 16 0v7.500H7.500zM0 8.500h6.500V15L0 14zM7.500 8.500H16V16l-8.500-1z" fill="currentColor" stroke="none" />
                </Icon>
            </div>
            <div className="flex w-[52px] justify-center">
                <Icon w={18} h={18}>
                    <circle cx="11" cy="6.500" r="5.500" strokeWidth="1.300" />
                    <path d="M7 10.500 1 17" strokeWidth="1.300" />
                </Icon>
            </div>
            <div className="flex w-[50px] justify-center pr-1">
                <Icon w={18} h={18} className="text-[#c9ced2]">
                    <path d="M1 1v3h11V1M1 17v-3h11v3M1 6h11v6H1zM16 1v16M16 7v3" strokeWidth="1.200" />
                </Icon>
            </div>
            <TaskCell>
                <FaEdgeLegacy className="-ml-0.5 size-[21px] text-[#1b7fdb]" />
            </TaskCell>
            <TaskCell>
                <Icon w={22} h={19} className="-ml-0.5">
                    <path d="M0 1h8l2 2h12v15H0z" fill="#f6d881" stroke="none" />
                    <path d="M1 2h6" stroke="#e3a93c" />
                    <path d="M3 18v-7h16v7h-4v-4H7v4z" fill="#46a9de" stroke="none" />
                </Icon>
            </TaskCell>
            <TaskCell>
                <Icon w={24} h={23} className="-mt-0.5 -ml-0.5">
                    <path d="M8 7V4a4 3.500 0 0 1 8 0v3" strokeWidth="1.500" />
                    <path d="M0 6h24v17H0z" fill="#fff" stroke="none" />
                    <path d="M7 9.500h4.500V14H7z" fill="#e8502e" stroke="none" />
                    <path d="M12.500 9.500H17V14h-4.500z" fill="#7cb832" stroke="none" />
                    <path d="M7 15h4.500v4.500H7z" fill="#2ca3e4" stroke="none" />
                    <path d="M12.500 15H17v4.500h-4.500z" fill="#f5b921" stroke="none" />
                </Icon>
            </TaskCell>
            <TaskCell>
                <Icon w={24} h={20} className="-ml-0.5">
                    <path d="M0 6 12 0l12 6v14H0z" fill="#fff" stroke="none" />
                    <path d="M2 6h20l-9 4 3 6-6-6z" fill="#15202a" stroke="none" />
                </Icon>
            </TaskCell>
            <TaskCell>
                <Icon w={24} h={24} className="-ml-0.5">
                    <ellipse cx="12" cy="12" rx="8.500" ry="9" stroke="#e0202f" strokeWidth="6" />
                    <ellipse cx="12.500" cy="12" rx="5" ry="8.500" fill="#15202a" stroke="#b51525" strokeWidth="1" />
                </Icon>
            </TaskCell>
            <TaskCell>
                <Icon w={18} h={24}>
                    <path d="M0 0h18v24H0z" fill="#fff" stroke="none" />
                    <path d="M2 2h14v4H2z" fill="#15202a" stroke="none" />
                    <path d="M3 10h13M3 15h13M3 20h13" stroke="#15202a" strokeWidth="2.500" strokeDasharray="2.500 2.500" />
                </Icon>
            </TaskCell>
            <TaskCell active>
                <Icon w={22} h={24} className="ml-0.5">
                    <circle cx="11" cy="12" r="10.500" fill="#30343a" stroke="none" />
                    <path d="M4 10q0-3 6-3t7 2q1 4-2 8t-5 6q-6-4-6-13z" fill="#f58220" stroke="none" />
                    <path d="M7.500 12q0 5 2 8" stroke="#ffc46b" strokeWidth="2" />
                    <path d="M4 7q2-4 6-2l4-5-1 5 5 1-4 3-3-1-3 1z" fill="#6fae3b" stroke="none" />
                </Icon>
            </TaskCell>
            <TaskCell running>
                <Icon w={23} h={23}>
                    <circle cx="11.500" cy="11.500" r="10.500" fill="#0a0a0a" stroke="#e8e8ea" strokeWidth="1.500" />
                    <circle cx="11.500" cy="11.500" r="6" fill="#e82330" stroke="none" />
                </Icon>
            </TaskCell>
            <TaskCell running>
                <Icon w={22} h={22}>
                    <rect width="22" height="22" rx="2" fill="#27a05c" stroke="none" />
                    <path d="M5.500 15V9.500L11 5l5.500 4.500V15" strokeWidth="3" stroke="#fff" strokeLinejoin="round" />
                    <path d="M4 12h4.500l1.500 2v3l-2 1.500H5.500L4 16zM18 12h-4.500L12 14v3l2 1.500h2.500L18 16z" fill="#fff" stroke="none" />
                </Icon>
            </TaskCell>

            <div className="ml-auto flex h-full items-center">
                <Icon w={16} h={18}>
                    <circle cx="10.500" cy="4" r="2.600" strokeWidth="1.400" />
                    <circle cx="4.500" cy="9" r="2.300" strokeWidth="1.400" />
                    <path d="M1 16q0-4 3.500-4T8 16M8 9q5-3 6 4" strokeWidth="1.400" />
                </Icon>
                <Icon w={14} h={8} className="ml-[21px]">
                    <path d="M1 7l6-6 6 6" strokeWidth="1.200" />
                </Icon>
                <Icon w={18} h={12} className="ml-2">
                    <path d="M5 4h11v7H3V7M16.500 6v3" strokeWidth="1.200" />
                    <path d="M4 5h11v5H4z" fill="#fff" stroke="none" />
                    <path d="M1 0v3M4 0v3M0 3.500h5M2.500 3v4" strokeWidth="1.200" />
                </Icon>
                <Icon w={14} h={14} className="ml-2 text-[#a2a9ae]">
                    <path d="M1 13A12 12 0 0 1 13 1M5 13a8 8 0 0 1 8-8M9 13a4 4 0 0 1 4-4" strokeWidth="1.200" />
                    <circle cx="12" cy="12" r="1.500" fill="#fff" stroke="none" />
                </Icon>
                <Icon w={16} h={14} className="ml-[9px]">
                    <path d="M1 5h2.500L7 1.500v11L3.500 9H1zM9 5q1.500 2 0 4M11 3q3 4 0 8M13 1.500q4.500 5.500 0 11" strokeWidth="1.100" />
                </Icon>
                <div className="ml-[9px] w-[72px] pt-0.5 text-center font-['Noto_Sans',sans-serif] text-[12px] leading-[18px] whitespace-nowrap">
                    <div className="tracking-[-0.300px]">17:28</div>
                    <div className="-mx-1 tracking-[-0.100px]">2019. 04. 17.</div>
                </div>
                <div className="relative ml-[16px] w-[37px]">
                    <Icon w={17} h={17}>
                        <path d="M0 0h17v13H8l-4 4v-4H0z" fill="#fff" stroke="none" />
                        <path d="M3 4h11M3 6.500h11M3 9h7" stroke="#1a2026" strokeWidth="1" />
                    </Icon>
                    <div className="absolute top-[7px] left-[7px] flex size-[18px] items-center justify-center rounded-full border border-[#7b8085] bg-[#292e33] font-['Noto_Sans',sans-serif] text-[10px] font-semibold">
                        21
                    </div>
                </div>
            </div>
            <div className="h-full w-px bg-[#5a6065]" />
            <div className="w-0.5" />
        </div>
    );
}

export default function App() {
    return (
        <div className="relative flex h-[720px] w-[1280px] flex-col overflow-hidden bg-[#565f69]">
            <div className="h-[5px] shrink-0 border-b border-[#474e58] bg-linear-to-b from-[#2f2f37] to-[#505862]" />
            <TopToolbar />
            <SecondToolbar />
            <div className="flex min-h-0 flex-1 border-l-4 border-[#3d434b]">
                <Browser />
                <PianoRoll />
            </div>
            <Taskbar />
            {/* recorder watermark */}
            <div className="absolute top-[3px] left-[515px] flex origin-left scale-x-[1.180] items-baseline font-['DejaVu_Sans',sans-serif] leading-[24px] font-bold text-white [text-shadow:1px_1px_2px_#000,-1px_-1px_2px_#000,1px_-1px_2px_#000,-1px_1px_2px_#000]">
                <span className="text-[15px]">www.</span>
                <span className="text-[19px] tracking-[0.500px]">BANDICAM</span>
                <span className="ml-0.5 text-[15px]">.com</span>
            </div>
        </div>
    );
}
